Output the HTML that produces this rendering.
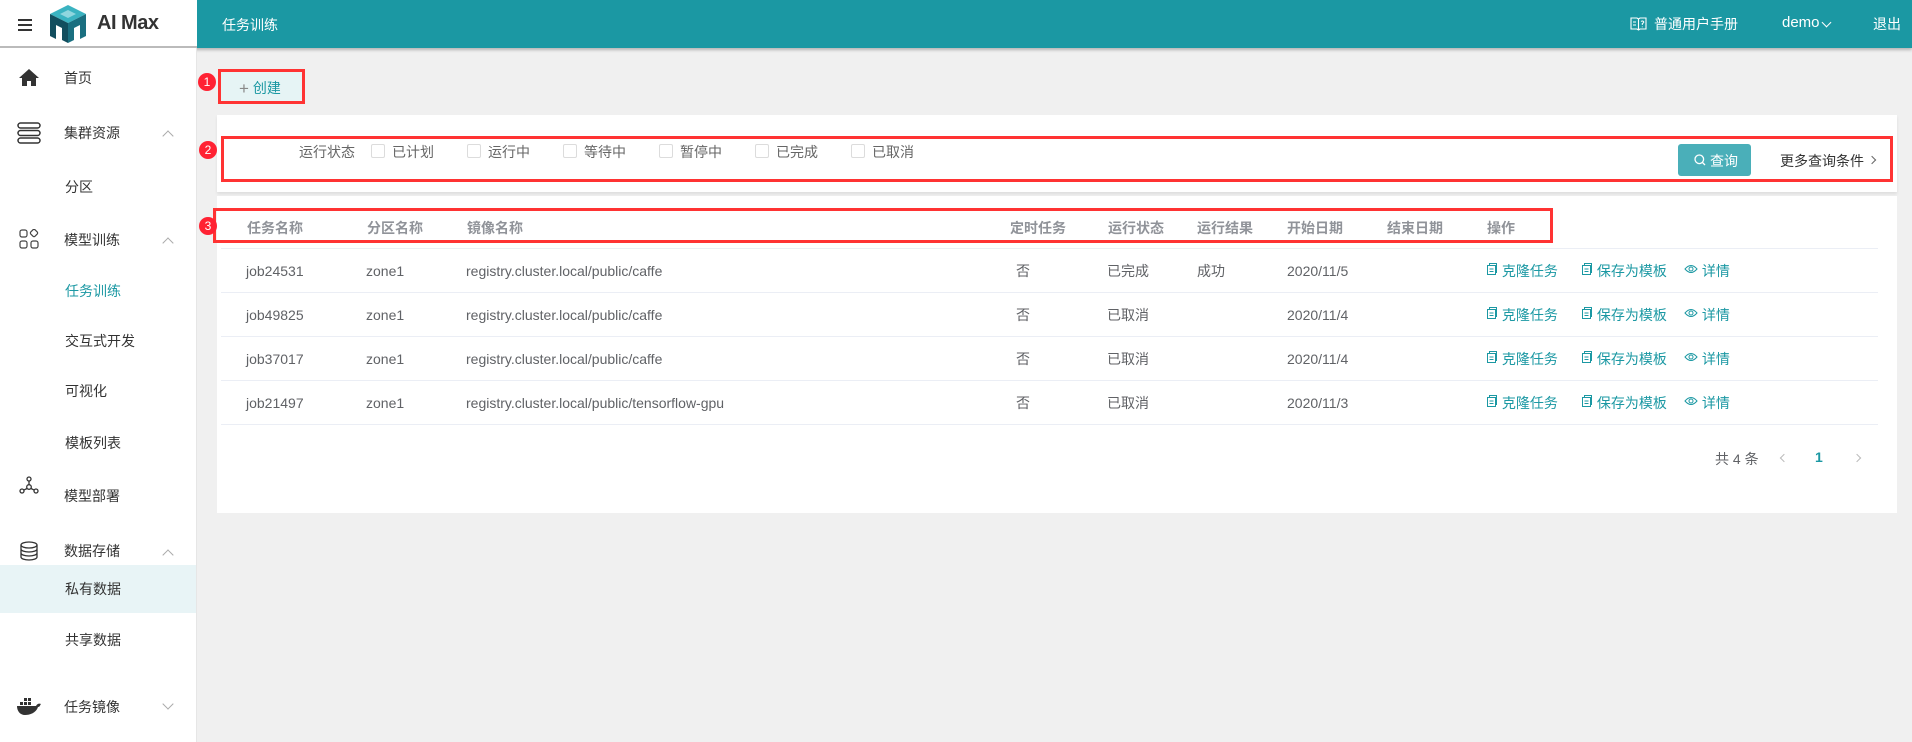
<!DOCTYPE html>
<html><head><meta charset="utf-8"><style>
*{margin:0;padding:0;box-sizing:border-box}
body{width:1912px;height:742px;overflow:hidden;background:#f0f0f0;font-family:"Liberation Sans","Noto Sans CJK SC",sans-serif;font-size:14px;color:#555;position:relative}
.abs{position:absolute;white-space:nowrap}
.hdr{position:absolute;left:0;top:0;width:1912px;height:48px;background:#1b98a3;box-shadow:0 2px 3px rgba(0,0,0,.25)}
.side{position:absolute;left:0;top:0;width:197px;height:742px;background:#fff;border-right:1px solid #e6e6e6}
.logo{position:absolute;left:0;top:0;width:197px;height:48px;background:#fff;border-bottom:2px solid #bbb}
.si{position:absolute;left:64px;font-size:14px;color:#333;transform:translateY(-50%)}
.chev{position:absolute;left:164px;width:8px;height:8px;border-left:1px solid #aaa;border-top:1px solid #aaa}
.badge{position:absolute;width:18px;height:18px;border-radius:50%;background:#f23;color:#fff;font-size:12px;text-align:center;line-height:18px}
.red{position:absolute;border:3px solid #f33}
.cb{position:absolute;top:144px;width:14px;height:14px;border:1px solid #dcdcdc;border-radius:2px;background:#fff}
.th{position:absolute;top:218px;font-weight:bold;color:#909399;font-size:14px}
.td{position:absolute;font-size:14px;color:#606266;transform:translateY(-50%)}
.op{position:absolute;color:#1b98a3;font-size:14px;transform:translateY(-50%)}
.sep{position:absolute;left:221px;width:1657px;height:1px;background:#ebeef5}
</style></head><body>
<div class="hdr"></div>
<div class="abs" style="left:222px;top:15px;color:#fff;font-size:14px">任务训练</div>
<svg class="abs" style="left:1630px;top:16px" width="17" height="15" viewBox="0 0 17 15"><path d="M1 2h6l1.5 1 1.5-1h6v11h-6l-1.5 1-1.5-1H1z M8.5 3v11" fill="none" stroke="#fff" stroke-width="1.1"/><path d="M3 6h3M3 9h3M11 5.5q1.5-1 2.5 0t-1.2 2v1.5M12.3 10.5v.8" stroke="#fff" fill="none"/></svg>
<div class="abs" style="left:1654px;top:14px;color:#fff;font-size:14px">普通用户手册</div>
<div class="abs" style="left:1782px;top:14px;color:#fff;font-size:15px">demo</div>
<div class="abs" style="left:1823px;top:19px;width:7px;height:7px;border-right:1.3px solid #fff;border-bottom:1.3px solid #fff;transform:rotate(45deg)"></div>
<div class="abs" style="left:1873px;top:14px;color:#fff;font-size:14px">退出</div>

<div class="side"></div>
<div class="logo"></div>
<div class="abs" style="left:18px;top:19px;width:14px;height:1.5px;background:#333;box-shadow:0 5px 0 #333,0 10px 0 #333"></div>
<svg class="abs" style="left:48px;top:4px" width="40" height="40" viewBox="0 0 40 40"><path d="M20 1L38 10L20 19L2 10Z" fill="#3ab3c1"/><path d="M20 6L28 10L20 14L12 10Z" fill="#8fd6de"/><path d="M2 10L20 19V39L14 36V24L8 21V35L2 32Z" fill="#124e5e"/><path d="M38 10L20 19V39L26 36V24L32 21V35L38 32Z" fill="#1a6f80"/></svg>
<div class="abs" style="left:97px;top:12px;font-size:20px;font-weight:bold;color:#333;letter-spacing:-0.5px">AI Max</div>

<svg class="abs" style="left:18px;top:68px" width="22" height="18" viewBox="0 0 22 18"><path d="M11 1L1 10h3v8h5v-5h4v5h5v-8h3z" fill="#333"/></svg>
<div class="si" style="top:78px">首页</div>
<svg class="abs" style="left:17px;top:122px" width="24" height="22" viewBox="0 0 24 22"><rect x="1" y="1" width="22" height="5" rx="2.5" fill="none" stroke="#333" stroke-width="1.5"/><rect x="1" y="8.5" width="22" height="5" rx="2.5" fill="none" stroke="#333" stroke-width="1.5"/><rect x="1" y="16" width="22" height="5" rx="2.5" fill="none" stroke="#333" stroke-width="1.5"/></svg>
<div class="si" style="top:133px">集群资源</div>
<div class="chev" style="top:132px;transform:rotate(45deg)"></div>
<div class="si" style="top:187px;left:65px">分区</div>
<svg class="abs" style="left:19px;top:229px" width="20" height="20" viewBox="0 0 20 20" fill="none" stroke="#444" stroke-width="1.2"><rect x="1" y="1" width="7" height="7" rx="2"/><rect x="1" y="12" width="7" height="7" rx="2"/><rect x="12" y="12" width="7" height="7" rx="2"/><rect x="12" y="1" width="6" height="6" rx="1.5" transform="rotate(45 15 4)"/></svg>
<div class="si" style="top:240px">模型训练</div>
<div class="chev" style="top:239px;transform:rotate(45deg)"></div>
<div class="si" style="top:291px;left:65px;color:#1b98a3">任务训练</div>
<div class="si" style="top:341px;left:65px">交互式开发</div>
<div class="si" style="top:391px;left:65px">可视化</div>
<div class="si" style="top:443px;left:65px">模板列表</div>
<svg class="abs" style="left:19px;top:476px" width="20" height="18" viewBox="0 0 20 18" fill="none" stroke="#333" stroke-width="1.3"><circle cx="10" cy="3" r="2"/><circle cx="3" cy="15" r="2"/><circle cx="17" cy="15" r="2"/><circle cx="10" cy="11" r="2.3"/><path d="M10 5v3.7M8 12.5L4.6 14.2M12 12.5l3.4 1.7"/></svg>
<div class="si" style="top:496px">模型部署</div>
<svg class="abs" style="left:20px;top:541px" width="18" height="20" viewBox="0 0 18 20" fill="none" stroke="#333" stroke-width="1.3"><ellipse cx="9" cy="4" rx="8" ry="3"/><path d="M1 4v12c0 1.7 3.6 3 8 3s8-1.3 8-3V4M1 8c0 1.7 3.6 3 8 3s8-1.3 8-3M1 12c0 1.7 3.6 3 8 3s8-1.3 8-3"/></svg>
<div class="si" style="top:551px">数据存储</div>
<div class="chev" style="top:551px;transform:rotate(45deg)"></div>
<div class="abs" style="left:0;top:565px;width:196px;height:48px;background:#e8f4f6"></div>
<div class="si" style="top:589px;left:65px">私有数据</div>
<div class="si" style="top:640px;left:65px">共享数据</div>
<svg class="abs" style="left:16px;top:698px" width="26" height="18" viewBox="0 0 26 18"><path d="M1 8h19c1-2 3-3 5-2-1 1-1 3-3 3-2 6-8 8-13 8C4 17 1 13 1 8z" fill="#333"/><g fill="#333"><rect x="4" y="4" width="3" height="3"/><rect x="8" y="4" width="3" height="3"/><rect x="12" y="4" width="3" height="3"/><rect x="8" y="0" width="3" height="3"/><rect x="12" y="0" width="3" height="3"/></g></svg>
<div class="si" style="top:707px">任务镜像</div>
<div class="chev" style="top:700px;transform:rotate(225deg)"></div>

<!-- create -->
<div class="abs" style="left:219px;top:70px;width:85px;height:33px;background:#e6f4f5"></div>
<div class="red" style="left:218px;top:69px;width:87px;height:35px"></div>
<div class="abs" style="left:239px;top:78px;color:#1b98a3;font-size:14px"><span style="color:#888;font-size:17px;position:relative;top:1px">+</span> 创建</div>
<div class="badge" style="left:198px;top:73px">1</div>

<!-- filter -->
<div class="abs" style="left:217px;top:115px;width:1680px;height:77px;background:#fff;box-shadow:0 2px 3px rgba(0,0,0,.08)"></div>
<div class="red" style="left:221px;top:136px;width:1672px;height:46px"></div>
<div class="badge" style="left:199px;top:141px">2</div>
<div class="abs" style="left:299px;top:142px;color:#666">运行状态</div>
<div class="cb" style="left:371px"></div><div class="abs" style="left:392px;top:142px;color:#666">已计划</div>
<div class="cb" style="left:467px"></div><div class="abs" style="left:488px;top:142px;color:#666">运行中</div>
<div class="cb" style="left:563px"></div><div class="abs" style="left:584px;top:142px;color:#666">等待中</div>
<div class="cb" style="left:659px"></div><div class="abs" style="left:680px;top:142px;color:#666">暂停中</div>
<div class="cb" style="left:755px"></div><div class="abs" style="left:776px;top:142px;color:#666">已完成</div>
<div class="cb" style="left:851px"></div><div class="abs" style="left:872px;top:142px;color:#666">已取消</div>
<div class="abs" style="left:1678px;top:144px;width:73px;height:32px;background:#4aafb9;border-radius:3px"></div>
<svg class="abs" style="left:1694px;top:154px" width="12" height="12" viewBox="0 0 12 12" fill="none" stroke="#fff" stroke-width="1.3"><circle cx="5.3" cy="5.3" r="4.3"/><path d="M8.5 8.5L11 11"/></svg>
<div class="abs" style="left:1710px;top:151px;color:#fff;font-size:14px">查询</div>
<div class="abs" style="left:1780px;top:151px;color:#333;font-size:14px">更多查询条件</div>
<div class="abs" style="left:1869px;top:157px;width:6px;height:6px;border-right:1px solid #666;border-top:1px solid #666;transform:rotate(45deg)"></div>

<!-- table -->
<div class="abs" style="left:217px;top:196px;width:1680px;height:317px;background:#fff"></div>
<div class="red" style="left:213px;top:208px;width:1340px;height:35px"></div>
<div class="badge" style="left:199px;top:217px">3</div>
<div class="th" style="left:247px">任务名称</div>
<div class="th" style="left:367px">分区名称</div>
<div class="th" style="left:467px">镜像名称</div>
<div class="th" style="left:1010px">定时任务</div>
<div class="th" style="left:1108px">运行状态</div>
<div class="th" style="left:1197px">运行结果</div>
<div class="th" style="left:1287px">开始日期</div>
<div class="th" style="left:1387px">结束日期</div>
<div class="th" style="left:1487px">操作</div>
<div class="sep" style="top:248px"></div>
<div class="sep" style="top:292px"></div>
<div class="sep" style="top:336px"></div>
<div class="sep" style="top:380px"></div>
<div class="sep" style="top:424px"></div>

<div class="td" style="left:246px;top:271px">job24531</div><div class="td" style="left:366px;top:271px">zone1</div><div class="td" style="left:466px;top:271px">registry.cluster.local/public/caffe</div><div class="td" style="left:1016px;top:271px">否</div><div class="td" style="left:1107px;top:271px">已完成</div><div class="td" style="left:1197px;top:271px">成功</div><div class="td" style="left:1287px;top:271px">2020/11/5</div>
<div class="td" style="left:246px;top:315px">job49825</div><div class="td" style="left:366px;top:315px">zone1</div><div class="td" style="left:466px;top:315px">registry.cluster.local/public/caffe</div><div class="td" style="left:1016px;top:315px">否</div><div class="td" style="left:1107px;top:315px">已取消</div><div class="td" style="left:1287px;top:315px">2020/11/4</div>
<div class="td" style="left:246px;top:359px">job37017</div><div class="td" style="left:366px;top:359px">zone1</div><div class="td" style="left:466px;top:359px">registry.cluster.local/public/caffe</div><div class="td" style="left:1016px;top:359px">否</div><div class="td" style="left:1107px;top:359px">已取消</div><div class="td" style="left:1287px;top:359px">2020/11/4</div>
<div class="td" style="left:246px;top:403px">job21497</div><div class="td" style="left:366px;top:403px">zone1</div><div class="td" style="left:466px;top:403px">registry.cluster.local/public/tensorflow-gpu</div><div class="td" style="left:1016px;top:403px">否</div><div class="td" style="left:1107px;top:403px">已取消</div><div class="td" style="left:1287px;top:403px">2020/11/3</div>

<svg width="0" height="0" style="position:absolute"><defs><g id="cp" fill="none" stroke="#1b98a3" stroke-width="1"><rect x="1.5" y="3.5" width="8" height="9"/><path d="M3.5 3.5V1.5h7v9h-1M3.5 7h4M3.5 9.5h4"/></g><g id="ey" fill="none" stroke="#1b98a3" stroke-width="1"><path d="M1 7q6-7 12 0q-6 7-12 0z"/><circle cx="7" cy="7" r="2"/></g></defs></svg>
<div class="op" style="left:1486px;top:271px"><svg width="12" height="14"><use href="#cp"/></svg> 克隆任务</div>
<div class="op" style="left:1581px;top:271px"><svg width="12" height="14"><use href="#cp"/></svg> 保存为模板</div>
<div class="op" style="left:1684px;top:271px"><svg width="14" height="14"><use href="#ey"/></svg> 详情</div>
<div class="op" style="left:1486px;top:315px"><svg width="12" height="14"><use href="#cp"/></svg> 克隆任务</div>
<div class="op" style="left:1581px;top:315px"><svg width="12" height="14"><use href="#cp"/></svg> 保存为模板</div>
<div class="op" style="left:1684px;top:315px"><svg width="14" height="14"><use href="#ey"/></svg> 详情</div>
<div class="op" style="left:1486px;top:359px"><svg width="12" height="14"><use href="#cp"/></svg> 克隆任务</div>
<div class="op" style="left:1581px;top:359px"><svg width="12" height="14"><use href="#cp"/></svg> 保存为模板</div>
<div class="op" style="left:1684px;top:359px"><svg width="14" height="14"><use href="#ey"/></svg> 详情</div>
<div class="op" style="left:1486px;top:403px"><svg width="12" height="14"><use href="#cp"/></svg> 克隆任务</div>
<div class="op" style="left:1581px;top:403px"><svg width="12" height="14"><use href="#cp"/></svg> 保存为模板</div>
<div class="op" style="left:1684px;top:403px"><svg width="14" height="14"><use href="#ey"/></svg> 详情</div>

<div class="abs" style="left:1715px;top:449px;color:#606266">共 4 条</div>
<div class="abs" style="left:1781px;top:455px;width:6px;height:6px;border-left:1px solid #bbb;border-bottom:1px solid #bbb;transform:rotate(45deg)"></div>
<div class="abs" style="left:1815px;top:449px;color:#1b98a3;font-weight:bold">1</div>
<div class="abs" style="left:1854px;top:455px;width:6px;height:6px;border-right:1px solid #bbb;border-top:1px solid #bbb;transform:rotate(45deg)"></div>
</body></html>
